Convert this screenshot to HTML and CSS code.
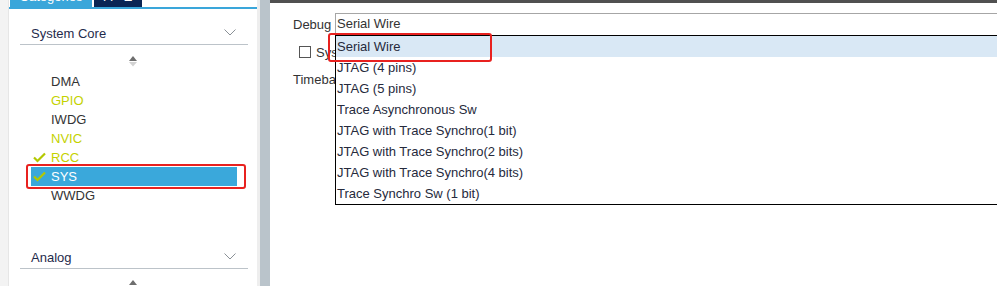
FILE: index.html
```html
<!DOCTYPE html>
<html>
<head>
<meta charset="utf-8">
<link rel="stylesheet" href="styles.css">
</head>
<body>
<div class="app">
  <aside class="side">
    <div class="edge"></div>
    <div class="panel">
      <div class="tabs">
        <div class="tab tab-cat"><span>Categories</span></div>
        <div class="tab tab-az"><span>A-&gt;Z</span></div>
      </div>
      <div class="tabline"></div>
      <div class="group-head">
        <span>System Core</span>
        <svg class="chev" width="12" height="7" viewBox="0 0 12 7"><polyline points="0.5,0.5 6,6 11.5,0.5" fill="none" stroke="#8a9096" stroke-width="1"/></svg>
      </div>
      <div class="scroll">
        <svg width="10" height="11" viewBox="0 0 10 11"><polygon points="5,0 9,5 1,5" fill="#6e6e6e"/><polygon points="1,6 9,6 5,10.5" fill="#d2d2d2"/></svg>
      </div>
      <ul class="items">
        <li class="item">DMA</li>
        <li class="item warn">GPIO</li>
        <li class="item">IWDG</li>
        <li class="item warn">NVIC</li>
        <li class="item warn"><svg class="check" width="13" height="11" viewBox="0 0 13 11"><polyline points="1,5.5 4.5,9 12,1.5" fill="none" stroke="#b4c800" stroke-width="2.2"/></svg>RCC</li>
        <li class="item sel"><svg class="check" width="13" height="11" viewBox="0 0 13 11"><polyline points="1,5.5 4.5,9 12,1.5" fill="none" stroke="#b4c800" stroke-width="2.2"/></svg>SYS<div class="redbox redbox-side"></div></li>
        <li class="item">WWDG</li>
      </ul>
      <div class="group-head">
        <span>Analog</span>
        <svg class="chev" width="12" height="7" viewBox="0 0 12 7"><polyline points="0.5,0.5 6,6 11.5,0.5" fill="none" stroke="#8a9096" stroke-width="1"/></svg>
      </div>
      <div class="scroll scroll-2">
        <svg width="10" height="11" viewBox="0 0 10 11"><polygon points="5,0 9,5 1,5" fill="#6e6e6e"/></svg>
      </div>
    </div>
    <div class="light"></div>
    <div class="split"></div>
  </aside>
  <main class="main">
    <div class="topbar"></div>
    <div class="form">
      <div class="row row-debug">
        <label class="lbl">Debug</label>
        <div class="select">Serial Wire</div>
      </div>
      <div class="row row-check">
        <span class="box"></span>
        <span class="chk-label">System Wake-Up</span>
      </div>
      <div class="row row-time">
        <label class="lbl">Timebase Source</label>
      </div>
    </div>
    <ul class="menu">
      <li class="opt hl">Serial Wire</li>
      <li class="opt">JTAG (4 pins)</li>
      <li class="opt">JTAG (5 pins)</li>
      <li class="opt">Trace Asynchronous Sw</li>
      <li class="opt">JTAG with Trace Synchro(1 bit)</li>
      <li class="opt">JTAG with Trace Synchro(2 bits)</li>
      <li class="opt">JTAG with Trace Synchro(4 bits)</li>
      <li class="opt">Trace Synchro Sw (1 bit)</li>
    </ul>
    <div class="redbox redbox-menu"></div>
  </main>
</div>
</body>
</html>
```
FILE: styles.css
```css
* { box-sizing: border-box; }
html, body { margin: 0; padding: 0; }
body {
  width: 997px;
  height: 286px;
  overflow: hidden;
  background: #ffffff;
  font-family: "Liberation Sans", Arial, sans-serif;
  font-size: 13px;
  color: #333;
}
.app {
  display: flex;
  height: 286px;
}
.side {
  display: flex;
  width: 270px;
  flex: none;
  height: 286px;
}
.edge {
  width: 9px;
  background: #f3f3f3;
  border-right: 1px solid #e6e6e6;
}
.panel {
  width: 248px;
  height: 286px;
  overflow: hidden;
  background: #fff;
  display: flex;
  flex-direction: column;
}
.panel > * {
  flex: none;
}
.light {
  width: 3px;
  background: #eeeeee;
}
.split {
  width: 10px;
  background: #bac4cb;
}
.tabs {
  display: flex;
  height: 7px;
  overflow: hidden;
}
.tab {
  height: 7px;
  overflow: hidden;
  color: #fff;
  font-size: 13px;
  line-height: 15px;
  text-align: center;
}
.tab span {
  display: block;
  margin-top: -11px;
}
.tab-cat {
  margin-left: 1px;
  width: 82px;
  background: #3aa6da;
}
.tab-az {
  margin-left: 2px;
  width: 48px;
  background: #0a2554;
}
.tabline {
  height: 2px;
  background: #3aa6da;
}
.group-head {
  margin: 0 9px 0 11px;
  height: 36px;
  display: flex;
  align-items: flex-end;
  justify-content: space-between;
  padding: 0 12px 3px 11px;
  border-bottom: 1px solid #bcc3c9;
  color: #1f2b4c;
  font-size: 13px;
  line-height: 15px;
}
.group-head .chev {
  margin-bottom: 5px;
}
.scroll {
  display: flex;
  justify-content: center;
  height: 11px;
  margin-top: 11px;
}
.scroll-2 {
  margin-top: 11px;
}
.items {
  list-style: none;
  margin: 5px 0 0 22px;
  padding: 0;
  width: 206px;
  height: 161px;
}
.item {
  position: relative;
  height: 19px;
  line-height: 19px;
  padding-left: 20px;
  color: #333;
  font-size: 13px;
}
.item.warn { color: #c4d200; }
.item.sel {
  background: #3aa8db;
  color: #fff;
}
.check {
  position: absolute;
  left: 2px;
  top: 4px;
}
.redbox {
  position: absolute;
  border: 2px solid #e8211f;
  border-radius: 3px;
}
.redbox-side {
  left: -5px;
  top: -3px;
  width: 220px;
  height: 25px;
}
.main {
  position: relative;
  flex: 1;
  height: 286px;
  overflow: hidden;
  background: #fff;
}
.topbar {
  height: 3px;
  background: #505050;
}
.form {
  padding: 10px 0 0 23px;
}
.row {
  display: flex;
  align-items: center;
}
.lbl {
  width: 42px;
  flex: none;
  color: #333;
  font-size: 13px;
  white-space: nowrap;
}
.select {
  flex: 1;
  height: 23px;
  border: 1px solid #a6a6a6;
  border-right: none;
  padding-left: 1px;
  line-height: 20px;
  color: #333;
}
.row-check {
  margin-top: 10px;
  padding-left: 6px;
  height: 12px;
}
.box {
  width: 12px;
  height: 12px;
  border: 1px solid #555;
  background: #fff;
  flex: none;
}
.chk-label {
  margin-left: 5px;
  color: #333;
}
.row-time {
  margin-top: 14px;
}
.menu {
  position: absolute;
  left: 65px;
  top: 35px;
  width: 700px;
  list-style: none;
  margin: 0;
  padding: 0;
  background: #fff;
  border: 1px solid #000;
  border-right: none;
}
.opt {
  height: 21px;
  line-height: 21px;
  padding-left: 1px;
  color: #262a3c;
  font-size: 13px;
  white-space: nowrap;
}
.opt.hl {
  background: #d9e8f5;
}
.redbox-menu {
  left: 58px;
  top: 33px;
  width: 164px;
  height: 29px;
}
```
